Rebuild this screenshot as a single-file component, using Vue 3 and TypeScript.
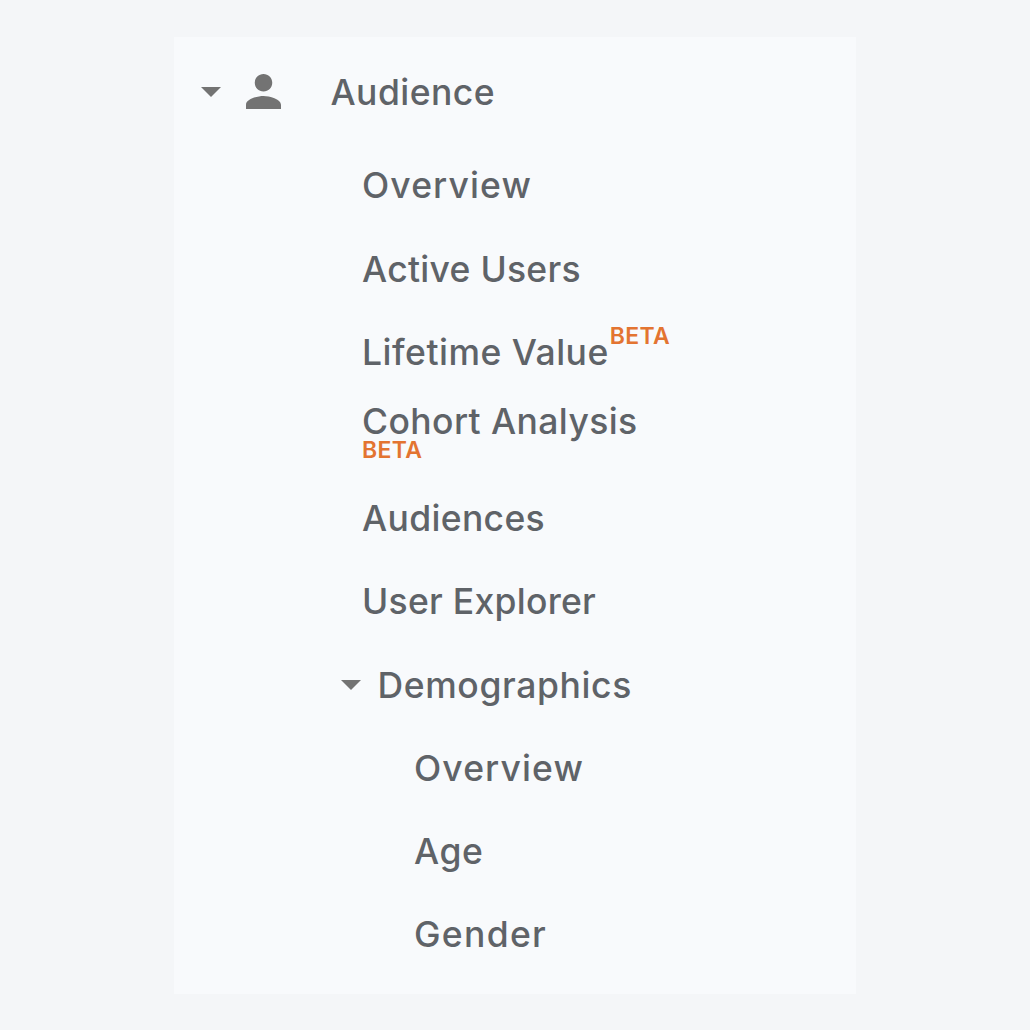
<script setup lang="ts">
interface NavItem {
  label: string
  level: 'item' | 'group' | 'child'
  spacing: number
  beta?: 'raised' | 'below'
}

const items: NavItem[] = [
  { label: 'Overview', level: 'item', spacing: 1.1 },
  { label: 'Active Users', level: 'item', spacing: 0.28 },
  { label: 'Lifetime Value', level: 'item', spacing: 0.5, beta: 'raised' },
  { label: 'Cohort Analysis', level: 'item', spacing: 0.4, beta: 'below' },
  { label: 'Audiences', level: 'item', spacing: 0.33 },
  { label: 'User Explorer', level: 'item', spacing: 0.27 },
  { label: 'Demographics', level: 'group', spacing: 0.62 },
  { label: 'Overview', level: 'child', spacing: 1.1 },
  { label: 'Age', level: 'child', spacing: 0.5 },
  { label: 'Gender', level: 'child', spacing: 1.3 },
]
</script>

<template>
  <main class="page">
    <nav class="panel">
      <header class="heading">
        <svg class="caret" viewBox="0 0 20 10"><path d="M0 0H20L10 10Z" /></svg>
        <svg class="person" viewBox="4 4 16 16">
          <path d="M12 12c2.21 0 4-1.79 4-4s-1.79-4-4-4-4 1.79-4 4 1.79 4 4 4zm0 2c-2.67 0-8 1.34-8 4v2h16v-2c0-2.66-5.33-4-8-4z" />
        </svg>
        <span class="label" :style="{ letterSpacing: '0.45px' }">Audience</span>
      </header>
      <ul class="list">
        <li v-for="(item, i) in items" :key="i" class="row" :class="[item.level, item.beta]">
          <svg v-if="item.level === 'group'" class="caret" viewBox="0 0 20 10"><path d="M0 0H20L10 10Z" /></svg>
          <span class="label" :style="{ letterSpacing: item.spacing + 'px' }">{{ item.label }}</span>
          <span v-if="item.beta" class="beta">BETA</span>
        </li>
      </ul>
    </nav>
  </main>
</template>

<style>
body {
  margin: 0;
  background: #f4f6f8;
}
</style>

<style scoped>
.page {
  box-sizing: border-box;
  height: 1030px;
  padding: 37px 174px 0;
  overflow: hidden;
  background: #f4f6f8;
  font-family: Inter, "Liberation Sans", sans-serif;
  font-weight: 500;
  color: #5f6368;
}
.panel {
  box-sizing: border-box;
  width: 682px;
  height: 957px;
  background: #f8fafc;
}
.heading {
  box-sizing: border-box;
  display: flex;
  align-items: center;
  height: 107.8px;
  padding: 0.2px 0 0 27px;
}
.caret {
  width: 20px;
  height: 10px;
  fill: #737373;
}
.heading .caret {
  margin-top: 2px;
}
.heading .label {
  margin-top: 4px;
}
.person {
  width: 35px;
  height: 35px;
  margin-top: 1px;
  margin-left: 24.5px;
  margin-right: 50px;
  fill: #737373;
}
.label {
  font-size: 35.5px;
  line-height: 36px;
  white-space: nowrap;
}
.list {
  margin: 0;
  padding: 0;
  list-style: none;
}
.row {
  display: flex;
  align-items: center;
  height: 83.2px;
  padding-left: 188px;
}
.group {
  padding-left: 167px;
}
.group .caret {
  margin: 0 16.5px 2px 0;
}
.child {
  padding-left: 240px;
}
.beta {
  font-size: 23px;
  font-weight: 600;
  line-height: 24px;
  letter-spacing: 0.3px;
  color: #e37431;
}
.raised .beta {
  margin: 0 0 33px 1px;
}
.below {
  box-sizing: border-box;
  flex-direction: column;
  align-items: flex-start;
  justify-content: center;
  padding-bottom: 5px;
}
.below .beta {
  margin-top: -2px;
}
</style>
